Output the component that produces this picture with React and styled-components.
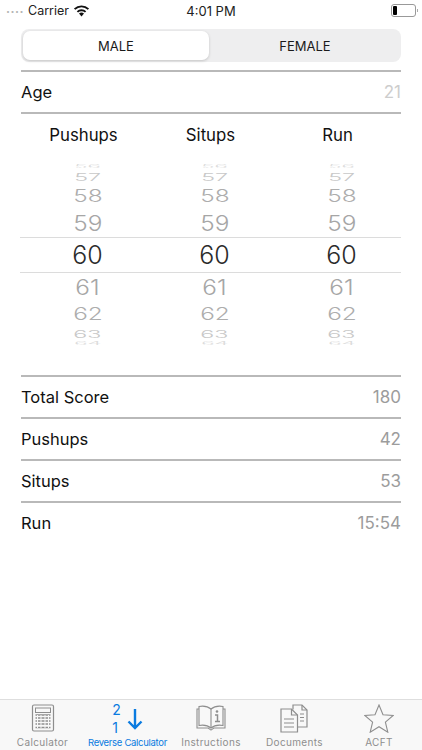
import React from 'react'
import styled, { createGlobalStyle } from 'styled-components'

const wheel = [
  { n: 56, h: 7, scale: 0.22, color: '#dcdcdc', size: 21 },
  { n: 57, h: 14, scale: 0.48, color: '#c8c8c8', size: 22 },
  { n: 58, h: 25, scale: 0.74, color: '#adadad', size: 23 },
  { n: 59, h: 29, scale: 0.94, color: '#a6a6a6', size: 23 },
  { n: 60, h: 35, scale: 1, color: '#2b2b2b', size: 25, wide: 1 },
  { n: 61, h: 29, scale: 0.94, color: '#a6a6a6', size: 23 },
  { n: 62, h: 25, scale: 0.74, color: '#adadad', size: 23 },
  { n: 63, h: 13, scale: 0.48, color: '#c8c8c8', size: 22 },
  { n: 64, h: 7, scale: 0.22, color: '#dcdcdc', size: 21 },
]

const App = () => (
  <Page>
    <GlobalStyle />
    <StatusBar>
      <StatusLeft>
        <Dots>....</Dots>
        <span>Carrier</span>
        <svg width="17" height="12" viewBox="0 0 17 12">
          <path d="M8.5 11.5 L11 8.6 A3.6 3.6 0 0 0 6 8.6 Z" fill="#111" />
          <path d="M4.4 6.9 A6 6 0 0 1 12.6 6.9" fill="none" stroke="#111" strokeWidth="1.9" />
          <path d="M1.6 4.1 A10 10 0 0 1 15.4 4.1" fill="none" stroke="#111" strokeWidth="1.9" />
        </svg>
      </StatusLeft>
      <Clock>4:01 PM</Clock>
      <Battery>
        <BatteryBody><BatteryFill /></BatteryBody>
        <BatteryTip />
      </Battery>
    </StatusBar>

    <Content>
      <Segment>
        <SegmentItem $active>MALE</SegmentItem>
        <SegmentItem>FEMALE</SegmentItem>
      </Segment>
      <AgeList>
        <Row><RowLabel>Age</RowLabel><RowValue $light>21</RowValue></Row>
      </AgeList>

      <Titles>
        <Title>Pushups</Title>
        <Title>Situps</Title>
        <Title>Run</Title>
      </Titles>

      <Picker>
        {[0, 1, 2].map(col => (
          <Wheel key={col}>
            {wheel.map(item => (
              <WheelRow key={item.n} $h={item.h}>
                <WheelNumber $scale={item.scale} $wide={item.wide} $color={item.color} $size={item.size}>{item.n}</WheelNumber>
              </WheelRow>
            ))}
          </Wheel>
        ))}
        <Selection />
      </Picker>

      <Results>
        <Row><RowLabel>Total Score</RowLabel><RowValue>180</RowValue></Row>
        <Row><RowLabel>Pushups</RowLabel><RowValue>42</RowValue></Row>
        <Row><RowLabel>Situps</RowLabel><RowValue>53</RowValue></Row>
        <Row><RowLabel>Run</RowLabel><RowValue>15:54</RowValue></Row>
      </Results>
    </Content>

    <TabBar>
      <Tab>
        <TabIcon>
          <svg width="24" height="28" viewBox="0 0 24 28" fill="none" stroke="#8e8e8e">
            <rect x="1.5" y="1" width="21" height="26" rx="1.5" strokeWidth="1.2" />
            <rect x="4.5" y="4" width="15" height="4.5" strokeWidth="1" />
            <path d="M4.5 11h15M4.5 14h15M4.5 17h15M4.5 20h15M4.5 23.5h15" strokeWidth="1.6" />
            <path d="M6.5 11v13M10 11v13M14 11v13M17.5 11v13" stroke="#f8f8f8" strokeWidth="1" />
          </svg>
        </TabIcon>
        <TabLabel>Calculator</TabLabel>
      </Tab>
      <Tab>
        <TabIcon>
          <ReverseIcon>
            <ReverseDigits><span>2</span><span>1</span></ReverseDigits>
            <svg width="16" height="22" viewBox="0 0 16 22" fill="none" stroke="#0a7be0" strokeWidth="2.4">
              <path d="M8 1v19M1.5 13.5L8 20l6.5-6.5" />
            </svg>
          </ReverseIcon>
        </TabIcon>
        <TabLabel $active>Reverse Calculator</TabLabel>
      </Tab>
      <Tab>
        <TabIcon>
          <svg width="30" height="26" viewBox="0 0 30 26" fill="none" stroke="#8e8e8e" strokeWidth="1.1">
            <path d="M15 4C12 1.5 7 .8 3 1.500v19c4-.7 9 0 12 2.500 3-2.500 8-3.200 12-2.500v-19C23 .8 18 1.500 15 4z" />
            <path d="M15 4v19" />
            <path d="M3 4H1v19h11c1 .6 2 1.500 3 2 1-.5 2-1.400 3-2h11V4h-2" />
            <circle cx="21" cy="6.500" r="1.300" fill="#8e8e8e" stroke="none" />
            <path d="M19 10h2.500v6.500M19 16.500h5" strokeWidth="1.500" />
          </svg>
        </TabIcon>
        <TabLabel>Instructions</TabLabel>
      </Tab>
      <Tab>
        <TabIcon>
          <svg width="29" height="29" viewBox="0 0 29 29" fill="none" stroke="#8e8e8e" strokeWidth="1.2">
            <path d="M13 5.500V1h9l5 5v17h-9" />
            <path d="M22 1v5h5M20 10h4M20 13.500h4M20 17h4" />
            <path d="M1 5h10.500l6 6v17H1z" fill="#f8f8f8" />
            <path d="M11.500 5v6h6M4 15h10M4 19h10M4 23h10" />
          </svg>
        </TabIcon>
        <TabLabel>Documents</TabLabel>
      </Tab>
      <Tab>
        <TabIcon>
          <svg width="30" height="29" viewBox="0 0 30 29" fill="none" stroke="#8e8e8e" strokeWidth="1.1">
            <path d="M15 1l4 9.700 10.200.8-7.800 6.700 2.400 10L15 22.700 6.200 28.200l2.400-10L.8 11.500 11 10.700z" />
          </svg>
        </TabIcon>
        <TabLabel>ACFT</TabLabel>
      </Tab>
    </TabBar>
  </Page>
)

const GlobalStyle = createGlobalStyle`
  html, body { margin: 0; padding: 0; background: #fff; }
  body { font-family: Inter, "Liberation Sans", sans-serif; color: #111; }
`
const Page = styled.div`
  width: 422px;
  height: 750px;
  display: flex;
  flex-direction: column;
  overflow: hidden;
`
const StatusBar = styled.div`
  height: 21px;
  flex-shrink: 0;
  display: grid;
  grid-template-columns: 1fr 1fr 1fr;
  align-items: center;
  font-size: 12.5px;
  color: #222;
`
const StatusLeft = styled.div`
  display: flex;
  align-items: center;
  padding-left: 6px;
  gap: 4px;
`
const Dots = styled.span`
  color: #b5b5b5;
  font-size: 12px;
  font-weight: 700;
  letter-spacing: 0.5px;
  line-height: 1;
  margin-top: -3px;
`
const Clock = styled.div`
  text-align: center;
  font-size: 13px;
`
const Battery = styled.div`
  display: flex;
  justify-content: flex-end;
  align-items: center;
  padding-right: 4px;
  gap: 1px;
`
const BatteryBody = styled.div`
  width: 21px;
  height: 9px;
  border: 1px solid #999;
  border-radius: 3px;
  padding: 1px;
`
const BatteryFill = styled.div`
  width: 4px;
  height: 100%;
  background: #000;
  border-radius: 1px;
`
const BatteryTip = styled.div`
  width: 1px;
  height: 3px;
  background: #aaa;
`
const Content = styled.div`
  flex: 1;
  padding: 8px 21px 0;
`
const Segment = styled.div`
  height: 33px;
  background: #eeeeef;
  border-radius: 8px;
  display: grid;
  grid-template-columns: 186px 1fr;
  padding: 2px 0 2px 2px;
  box-sizing: border-box;
`
const SegmentItem = styled.div`
  display: flex;
  align-items: center;
  justify-content: center;
  font-size: 13px;
  color: #1a1a1a;
  border-radius: 7px;
  background: ${p => (p.$active ? '#fff' : 'transparent')};
  box-shadow: ${p => (p.$active ? '0 1px 3px rgba(0,0,0,0.18)' : 'none')};
`
const AgeList = styled.div`
  margin-top: 8px;
  border-top: 2px solid #b9b9b9;
  border-bottom: 2px solid #b9b9b9;
`
const Row = styled.div`
  height: 40px;
  display: flex;
  align-items: center;
  justify-content: space-between;
`
const RowLabel = styled.span`
  font-size: 16.5px;
  color: #111;
`
const RowValue = styled.span`
  font-size: 17px;
  color: ${p => (p.$light ? '#cdcdcd' : '#9c9c9c')};
`
const Titles = styled.div`
  display: grid;
  grid-template-columns: repeat(3, 127px);
  height: 42px;
  align-items: center;
  margin-left: -1px;
`
const Title = styled.div`
  text-align: center;
  font-size: 16.8px;
  color: #111;
`
const Picker = styled.div`
  position: relative;
  display: grid;
  grid-template-columns: repeat(3, 127px);
  margin: 7px 0 0 3px;
  padding-bottom: 28px;
`
const Wheel = styled.div`
  display: flex;
  flex-direction: column;
`
const WheelRow = styled.div`
  height: ${p => p.$h}px;
  display: flex;
  align-items: center;
  justify-content: center;
  overflow: hidden;
`
const WheelNumber = styled.span`
  display: block;
  font-size: ${p => p.$size}px;
  line-height: 1;
  color: ${p => p.$color};
  font-weight: 300;
  transform: scale(${p => (p.$wide ? 1 : 1.06)}, ${p => p.$scale});
`
const Selection = styled.div`
  position: absolute;
  left: -4px;
  right: 0;
  top: 74px;
  height: 36px;
  box-sizing: border-box;
  border-top: 1px solid #dcdcdc;
  border-bottom: 1px solid #dcdcdc;
`
const Results = styled.div`
  border-top: 2px solid #b9b9b9;
  & > div + div { border-top: 2px solid #b9b9b9; }
`
const TabBar = styled.div`
  height: 50px;
  flex-shrink: 0;
  background: #f8f8f8;
  border-top: 1px solid #dedede;
  display: grid;
  grid-template-columns: 85px 85px 82px 85px 84px;
`
const Tab = styled.div`
  display: flex;
  flex-direction: column;
  align-items: center;
  justify-content: flex-end;
  padding-bottom: 2px;
  min-width: 0;
`
const TabIcon = styled.div`
  flex: 1;
  display: flex;
  align-items: center;
  justify-content: center;
`
const TabLabel = styled.div`
  font-size: ${p => (p.$active ? '9.5px' : '10px')};
  letter-spacing: ${p => (p.$active ? '-0.3px' : '0.35px')};
  color: ${p => (p.$active ? '#0a7be0' : '#8e8e8e')};
  white-space: nowrap;
`
const ReverseIcon = styled.div`
  display: flex;
  align-items: center;
  gap: 6px;
  color: #0a7be0;
`
const ReverseDigits = styled.div`
  display: flex;
  flex-direction: column;
  font-size: 14px;
  line-height: 18px;
`

export default App
